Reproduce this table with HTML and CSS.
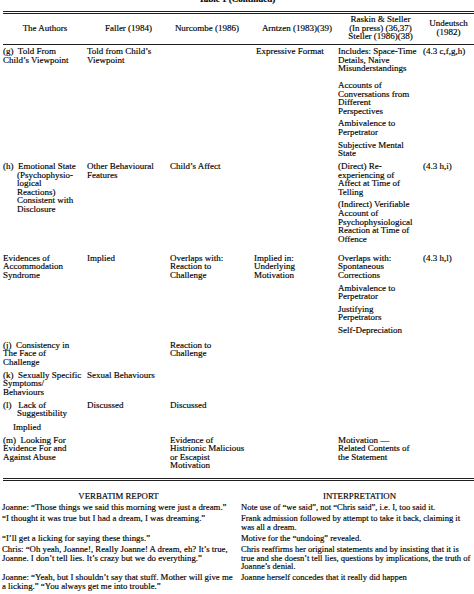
FILE: index.html
```html
<!DOCTYPE html>
<html lang="en">
<head>
<meta charset="utf-8">
<title>Table 1 (Continued)</title>
<link rel="stylesheet" href="styles.css">
</head>
<body>
<div class="page">
  <div class="title">Table 1 (Continued)</div>
  <div class="table">
    <div class="rule-double"></div>
    <div class="thead grid">
      <div class="th">The Authors</div>
      <div class="th">Faller (1984)</div>
      <div class="th th-nur">Nurcombe (1986)</div>
      <div class="th">Arntzen (1983)(39)</div>
      <div class="th">Raskin &amp; Steller<br>(In press) (36,37)<br>Steller (1986)(38)</div>
      <div class="th">Undeutsch<br>(1982)</div>
    </div>
    <div class="tbody">
      <div class="row grid">
        <div>(g)&nbsp; Told From<br>Child’s Viewpoint</div>
        <div>Told from Child’s<br>Viewpoint</div>
        <div></div>
        <div>Expressive Format</div>
        <div class="stack">
          <div>Includes: Space-Time<br>Details, Naive<br>Misunderstandings</div>
          <div class="far">Accounts of<br>Conversations from<br>Different<br>Perspectives</div>
          <div>Ambivalence to<br>Perpetrator</div>
          <div>Subjective Mental<br>State</div>
        </div>
        <div>(4.3 c,f,g,h)</div>
      </div>
      <div class="row grid">
        <div class="hang">(h)&nbsp; Emotional State<br>(Psychophysio-<br>logical<br>Reactions)<br>Consistent with<br>Disclosure</div>
        <div>Other Behavioural<br>Features</div>
        <div>Child’s Affect</div>
        <div></div>
        <div class="stack">
          <div>(Direct) Re-<br>experiencing of<br>Affect at Time of<br>Telling</div>
          <div>(Indirect) Verifiable<br>Account of<br>Psychophysiological<br>Reaction at Time of<br>Offence</div>
        </div>
        <div>(4.3 h,i)</div>
      </div>
      <div class="row grid row-wide">
        <div>Evidences of<br>Accommodation<br>Syndrome</div>
        <div>Implied</div>
        <div>Overlaps with:<br>Reaction to<br>Challenge</div>
        <div class="col4">Implied in:<br>Underlying<br>Motivation</div>
        <div class="stack">
          <div>Overlaps with:<br>Spontaneous<br>Corrections</div>
          <div>Ambivalence to<br>Perpetrator</div>
          <div>Justifying<br>Perpetrators</div>
          <div>Self-Depreciation</div>
        </div>
        <div>(4.3 h,l)</div>
      </div>
      <div class="row grid row-mid">
        <div>(j)&nbsp; Consistency in<br>The Face of<br>Challenge</div>
        <div></div>
        <div>Reaction to<br>Challenge</div>
        <div></div>
        <div></div>
        <div></div>
      </div>
      <div class="row grid">
        <div>(k)&nbsp; Sexually Specific<br>Symptoms/<br>Behaviours</div>
        <div>Sexual Behaviours</div>
        <div></div>
        <div></div>
        <div></div>
        <div></div>
      </div>
      <div class="row grid">
        <div class="stack">
          <div class="hang">(l)&nbsp;&nbsp; Lack of<br>Suggestibility</div>
          <div class="sub">Implied</div>
        </div>
        <div>Discussed</div>
        <div>Discussed</div>
        <div></div>
        <div></div>
        <div></div>
      </div>
      <div class="row grid">
        <div>(m)&nbsp; Looking For<br>Evidence For and<br>Against Abuse</div>
        <div></div>
        <div>Evidence of<br>Histrionic Malicious<br>or Escapist<br>Motivation</div>
        <div></div>
        <div>Motivation —<br>Related Contents of<br>the Statement</div>
        <div></div>
      </div>
    </div>
    <div class="rule-double rule-bottom"></div>
  </div>

  <div class="report">
    <div class="rh">VERBATIM REPORT</div>
    <div class="rh rh-right">INTERPRETATION</div>

    <div>Joanne: “Those things we said this morning were just a dream.”</div>
    <div class="rc">Note use of “we said”, not “Chris said”, i.e. I, too said it.</div>

    <div>“I thought it was true but I had a dream, I was dreaming.”</div>
    <div class="rc">Frank admission followed by attempt to take it back, claiming it<br>was all a dream.</div>

    <div>“I’ll get a licking for saying these things.”</div>
    <div class="rc">Motive for the “undoing” revealed.</div>

    <div>Chris: “Oh yeah, Joanne!, Really Joanne! A dream, eh? It’s true,<br>Joanne. I don’t tell lies. It’s crazy but we do everything.”</div>
    <div class="rc">Chris reaffirms her original statements and by insisting that it is<br>true and she doesn’t tell lies, questions by implications, the truth of<br>Joanne’s denial.</div>

    <div>Joanne: “Yeah, but I shouldn’t say that stuff. Mother will give me<br>a licking.” “You always get me into trouble.”</div>
    <div class="rc">Joanne herself concedes that it really did happen</div>
  </div>
</div>
</body>
</html>
```

FILE: styles.css
```css
html, body {
  margin: 0;
  padding: 0;
  background: #ffffff;
}

body {
  color: #000000;
  font-family: "Liberation Serif", "Times New Roman", serif;
  font-size: 9px;
  line-height: 8.6px;
  overflow: hidden;
  -webkit-text-stroke: 0.15px #000000;
}

.page {
  width: 474px;
  height: 594px;
  overflow: hidden;
}

.title {
  text-align: center;
  margin-top: -5px;
  height: 9px;
  line-height: 9px;
  font-weight: bold;
}

.table {
  padding-left: 3px;
}

.rule-double {
  margin-top: 7px;
  height: 1px;
  border-top: 1px solid #1e1e1e;
  border-bottom: 1px solid #1e1e1e;
}

.rule-bottom {
  margin-top: 8px;
}

.grid {
  display: grid;
  grid-template-columns: 84px 83px 86px 82px 85px 51px;
  white-space: nowrap;
}

.thead {
  align-items: center;
  padding: 1px 0 3px;
  border-bottom: 1px solid #1e1e1e;
}

.th {
  text-align: center;
}

.th-nur {
  padding-right: 12px;
}

.tbody {
  padding-top: 2.5px;
}

.row {
  margin-top: 4.2px;
}

.row:first-child {
  margin-top: 0;
}

.row-wide {
  margin-top: 10.5px;
}

.row-mid {
  margin-top: 6px;
}

.col4 {
  margin-left: -2px;
}

.stack {
  display: flex;
  flex-direction: column;
  gap: 4px;
}

.stack .far {
  margin-top: 4px;
}

.hang {
  padding-left: 14px;
  text-indent: -14px;
}

.sub {
  padding-left: 10px;
  margin-top: 1px;
}

.report {
  display: grid;
  grid-template-columns: 239px 233px;
  row-gap: 2.4px;
  padding-left: 2px;
  margin-top: 11.5px;
  font-size: 8.8px;
  white-space: nowrap;
}

.rc {
  font-size: 8.55px;
}

.rh {
  text-align: center;
  padding-right: 6px;
}

.rh-right {
  padding-right: 0;
  padding-left: 4px;
}
```
